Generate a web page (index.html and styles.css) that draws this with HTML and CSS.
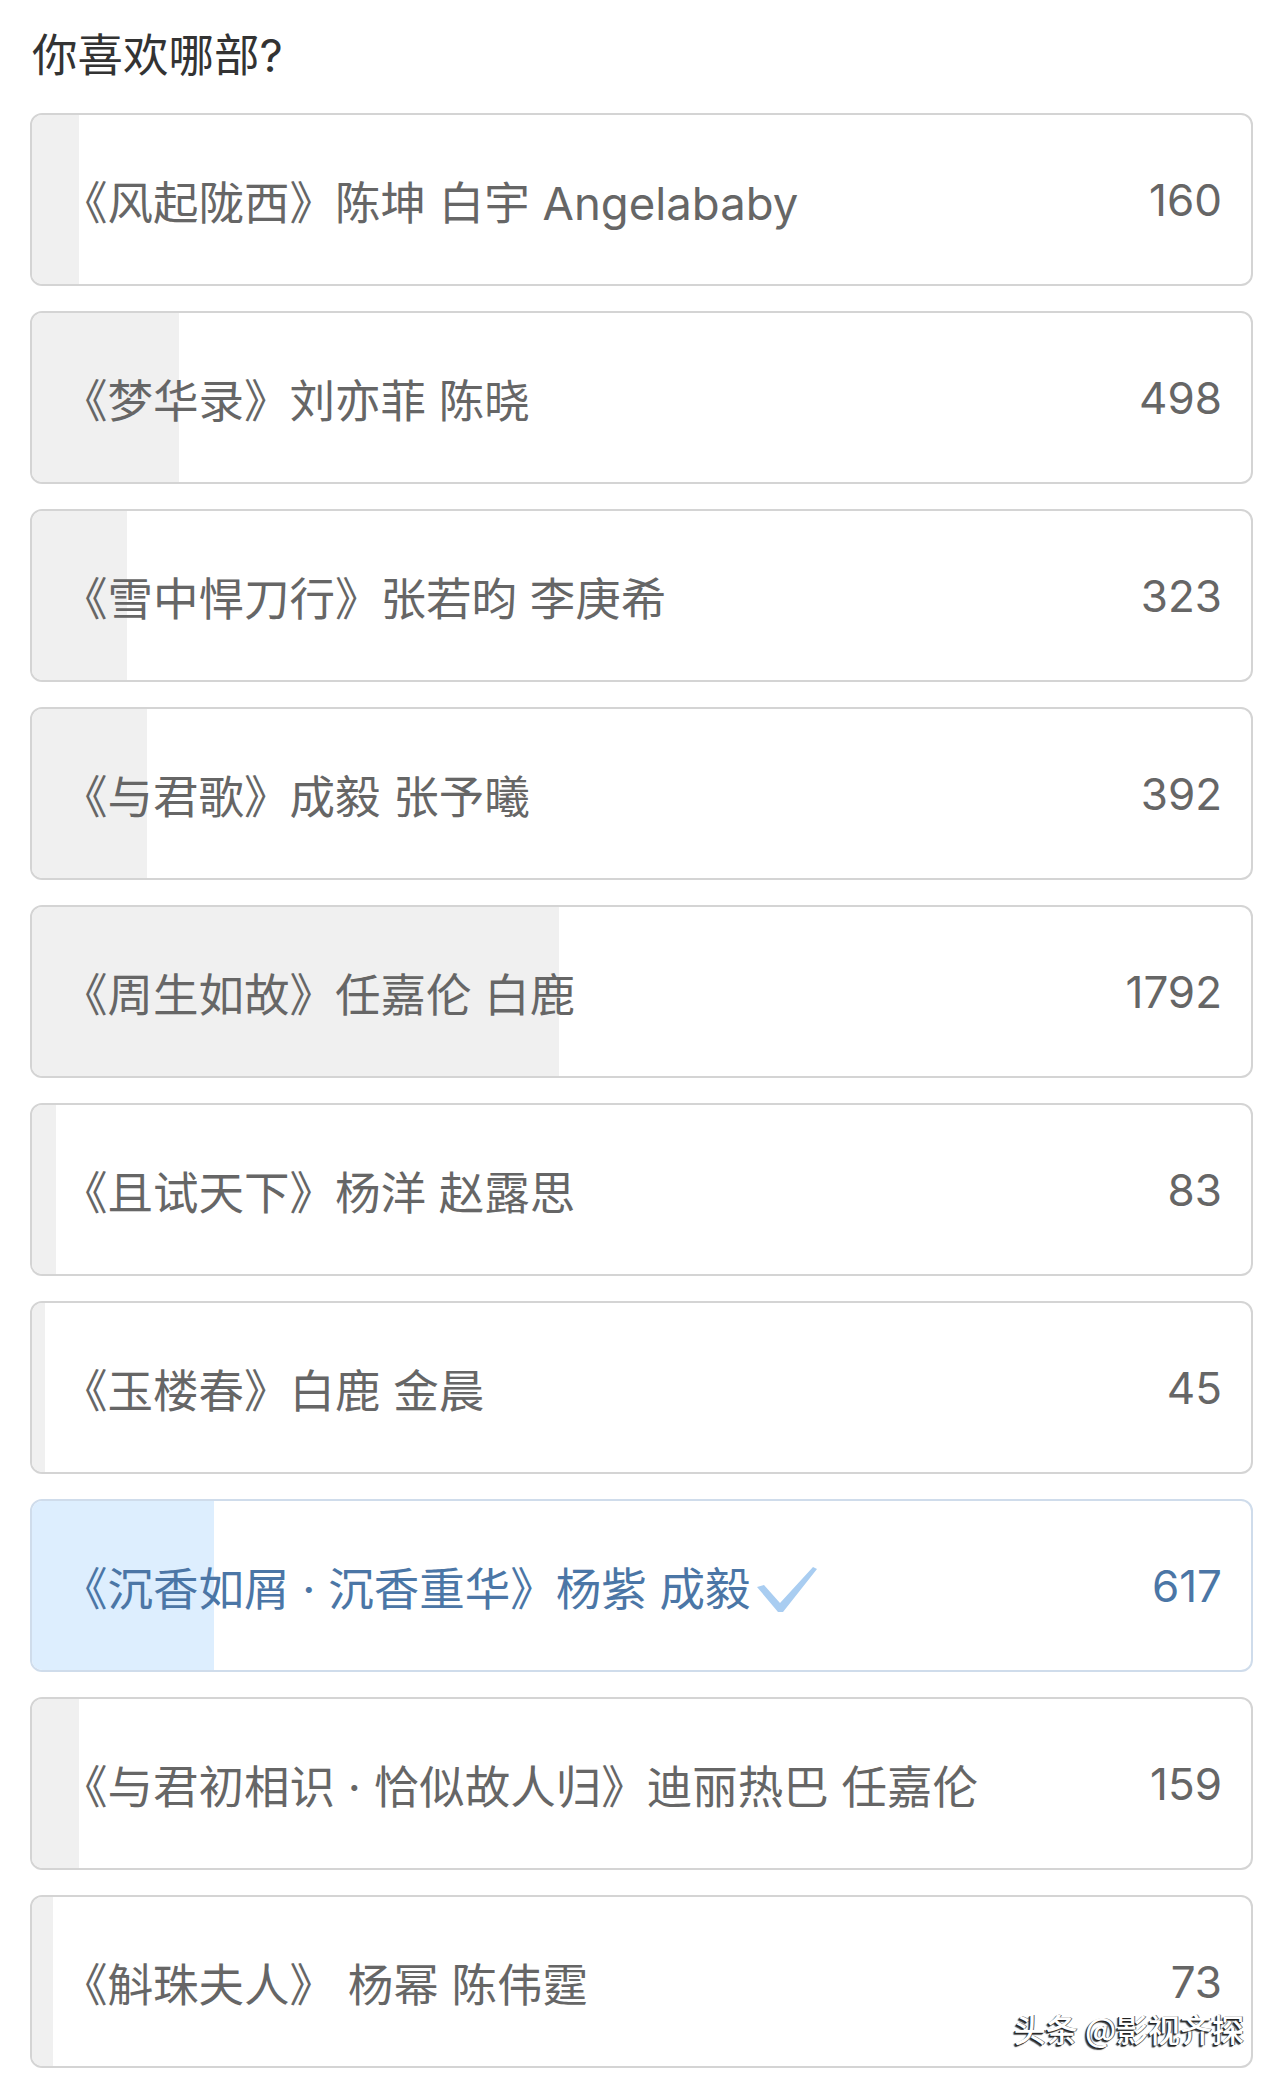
FILE: index.html
```html
<!DOCTYPE html>
<html lang="zh-CN">
<head>
  <meta charset="UTF-8">
  <meta name="viewport" content="width=device-width, initial-scale=1.0">
  <title>你喜欢哪部?</title>
  <link rel="stylesheet" href="styles.css">
</head>
<body>
  <div class="poll">
    <h1 class="poll-title">你喜欢哪部?</h1>

    <div class="options">
      <div class="option">
        <div class="fill" style="width: 3.86%"></div>
        <div class="content"><span class="label">《风起陇西》陈坤 白宇 Angelababy</span><span class="count">160</span></div>
      </div>
      <div class="option">
        <div class="fill" style="width: 12.02%"></div>
        <div class="content"><span class="label">《梦华录》刘亦菲 陈晓</span><span class="count">498</span></div>
      </div>
      <div class="option">
        <div class="fill" style="width: 7.80%"></div>
        <div class="content"><span class="label">《雪中悍刀行》张若昀 李庚希</span><span class="count">323</span></div>
      </div>
      <div class="option">
        <div class="fill" style="width: 9.46%"></div>
        <div class="content"><span class="label">《与君歌》成毅 张予曦</span><span class="count">392</span></div>
      </div>
      <div class="option">
        <div class="fill" style="width: 43.26%"></div>
        <div class="content"><span class="label">《周生如故》任嘉伦 白鹿</span><span class="count">1792</span></div>
      </div>
      <div class="option">
        <div class="fill" style="width: 2.00%"></div>
        <div class="content"><span class="label">《且试天下》杨洋 赵露思</span><span class="count">83</span></div>
      </div>
      <div class="option">
        <div class="fill" style="width: 1.09%"></div>
        <div class="content"><span class="label">《玉楼春》白鹿 金晨</span><span class="count">45</span></div>
      </div>
      <div class="option selected">
        <div class="fill" style="width: 14.90%"></div>
        <div class="content">
          <span class="label">《沉香如屑 · 沉香重华》杨紫 成毅<svg class="check" width="60" height="46" viewBox="0 0 60 46"><path d="M0 20 L7 18 L23 36 L56 0 L60 2 L26 45 L21 45 Z" fill="#a9cdf1"/></svg></span>
          <span class="count">617</span>
        </div>
      </div>
      <div class="option">
        <div class="fill" style="width: 3.84%"></div>
        <div class="content"><span class="label">《与君初相识 · 恰似故人归》迪丽热巴 任嘉伦</span><span class="count">159</span></div>
      </div>
      <div class="option">
        <div class="fill" style="width: 1.76%"></div>
        <div class="content"><span class="label">《斛珠夫人》 杨幂 陈伟霆</span><span class="count">73</span></div>
      </div>
    </div>
  </div>

  <div class="watermark">头条 @影视齐探</div>
</body>
</html>
```

FILE: styles.css
```css
body {
  margin: 0;
  background-color: #fff;
  font-family: Inter, "Noto Sans CJK SC", sans-serif;
  color: #666;
}

.poll {
  padding: 29px 19px 9px 30px;
}

.poll-title {
  margin: 0 0 31px 2px;
  font-size: 45.5px;
  line-height: 53px;
  font-weight: 400;
  color: #333;
}

.options {
  display: flex;
  flex-direction: column;
  gap: 25px;
}

.option {
  display: grid;
  height: 173px;
  box-sizing: border-box;
  border: 2px solid #d4d4d4;
  border-radius: 12px;
  overflow: hidden;
  background-color: #fff;
}

.fill,
.content {
  grid-area: 1 / 1;
}

.fill {
  height: 100%;
  background-color: #f0f0f0;
}

.content {
  display: flex;
  justify-content: space-between;
  align-items: center;
  padding: 0 29px 0 30px;
  font-size: 45.5px;
}

.label {
  display: flex;
  align-items: center;
  white-space: nowrap;
}

.count {
  font-size: 44px;
}

.check {
  margin-left: 6px;
  margin-top: 8px;
}

.selected {
  border-color: #cfdceb;
}

.selected .fill {
  background-color: #ddeefe;
}

.selected .content {
  color: #4b76a6;
}

.watermark {
  position: absolute;
  right: 28px;
  top: 2005px;
  font-family: "Noto Sans CJK SC", sans-serif;
  font-size: 32px;
  font-weight: 500;
  color: #fff;
  text-shadow: -1px 1px 0 #222, -2px 2px 1px #444, 1px 0 0 #666;
}
```
